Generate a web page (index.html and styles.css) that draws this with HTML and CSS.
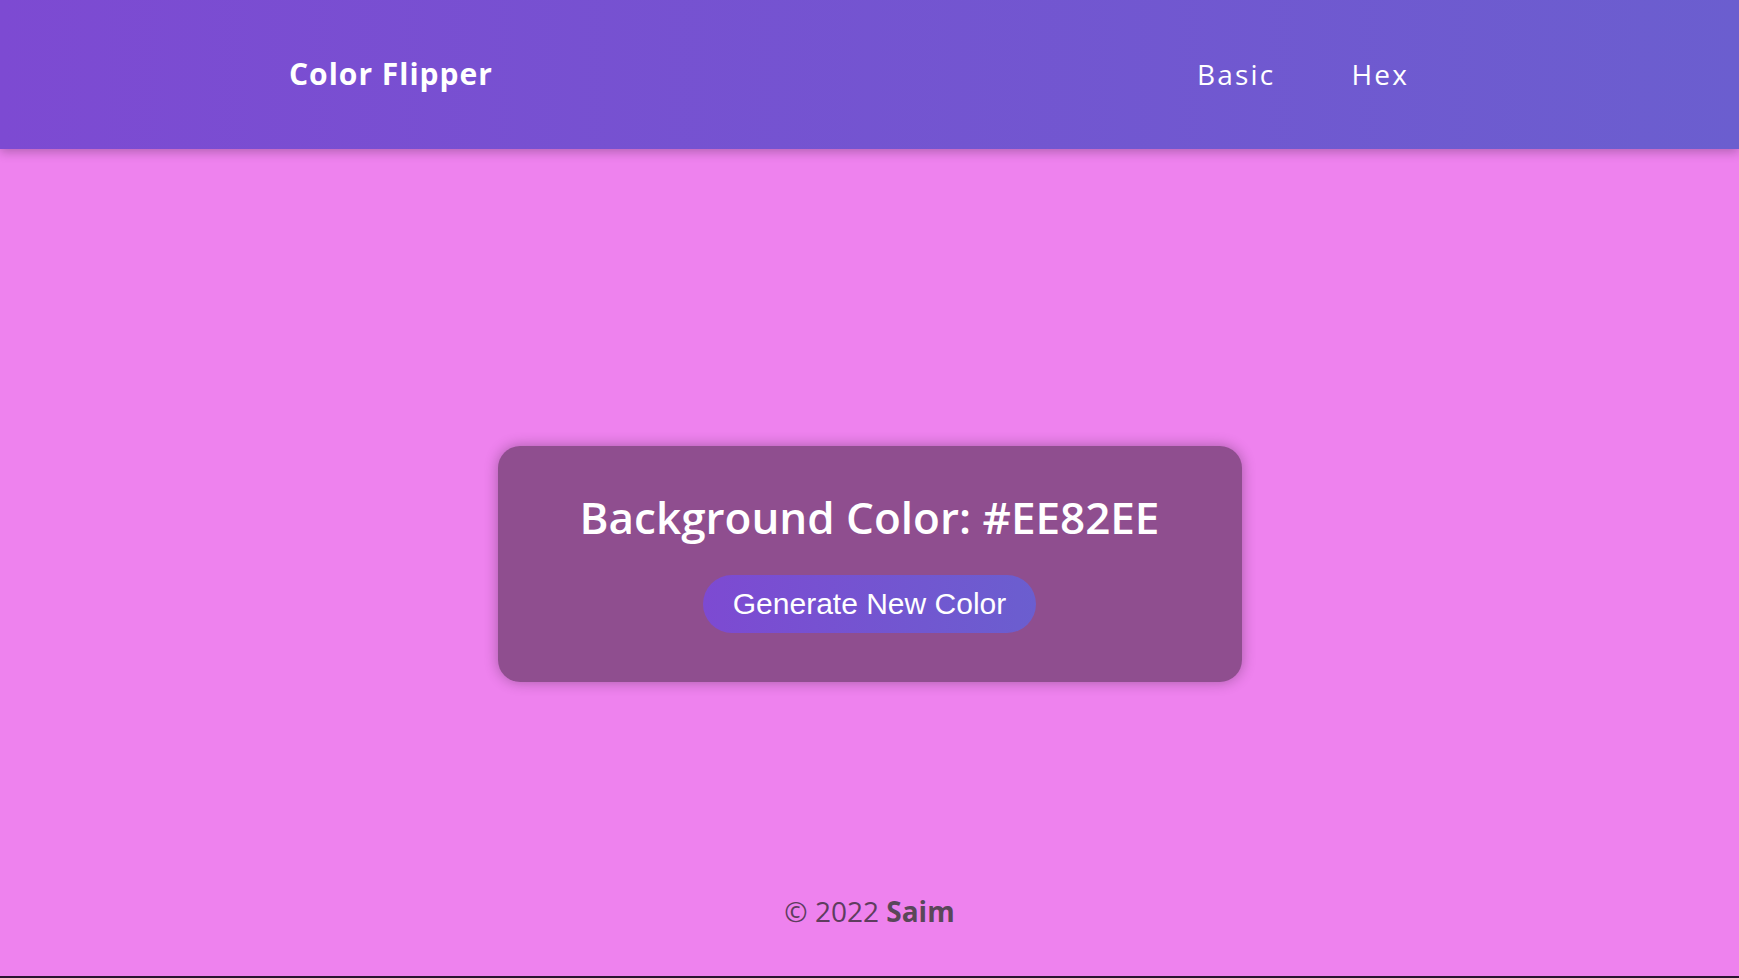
FILE: index.html
```html
<!DOCTYPE html>
<html lang="en">
<head>
<meta charset="UTF-8">
<meta name="viewport" content="width=device-width, initial-scale=1.0">
<title>Color Flipper</title>
<link rel="stylesheet" href="styles.css">
</head>
<body>

<header class="navbar">
  <div class="navInner">
    <a class="brand" href="#">Color Flipper</a>
    <nav class="navLinks">
      <a href="#">Basic</a>
      <a href="#">Hex</a>
    </nav>
  </div>
</header>

<main class="main">
  <div class="colorCard">
    <h2 class="colorLabel">Background Color: <span id="colorValue">#EE82EE</span></h2>
    <button id="flipBtn" class="flipBtn">Generate New Color</button>
  </div>
</main>

<footer class="footer">
  <p>&copy; 2022 <strong>Saim</strong></p>
</footer>

<script>
  var hexChars = "0123456789ABCDEF";

  function randomHex() {
    var hex = "#";
    for (var i = 0; i < 6; i++) {
      hex += hexChars[Math.floor(Math.random() * 16)];
    }
    return hex;
  }

  document.getElementById("flipBtn").addEventListener("click", function() {
    var color = randomHex();
    document.body.style.backgroundColor = color;
    document.getElementById("colorValue").textContent = color;
  });
</script>

</body>
</html>
```

FILE: styles.css
```css
* {
  box-sizing: border-box;
}
html, body {
  margin: 0;
  padding: 0;
}
body {
  font-family: "Open Sans", "Noto Sans", sans-serif;
  background-color: #ee82ee;
  min-height: 100vh;
  display: flex;
  flex-direction: column;
  border-bottom: 2px solid #2b1530;
}
a {
  text-decoration: none;
  color: inherit;
}
.navbar {
  height: 149px;
  background: linear-gradient(to right, #7d4ad2, #6b5ecf);
  box-shadow: 0 3px 10px rgba(0, 0, 0, 0.25);
  color: #fff;
  position: relative;
  z-index: 1;
}
.navInner {
  height: 100%;
  padding: 0 330px 2px 289px;
  display: flex;
  align-items: center;
  justify-content: space-between;
}
.brand {
  font-size: 30px;
  font-weight: 700;
  letter-spacing: 1px;
}
.navLinks {
  display: flex;
  gap: 76px;
}
.navLinks a {
  font-size: 28px;
  letter-spacing: 2.2px;
}
.main {
  flex: 1;
  display: flex;
  align-items: center;
  justify-content: center;
  padding-top: 98px;
}
.colorCard {
  width: 744px;
  height: 236px;
  background-color: rgba(0, 0, 0, 0.4);
  border-radius: 22px;
  box-shadow: 0 0 14px rgba(0, 0, 0, 0.3);
  display: flex;
  flex-direction: column;
  align-items: center;
  padding-top: 45px;
}
.colorLabel {
  margin: 0 0 32px;
  color: #fff;
  font-size: 44px;
  font-weight: 600;
  line-height: 52px;
}
.flipBtn {
  font-family: "Liberation Sans", Arial, sans-serif;
  font-size: 30px;
  color: #fff;
  border: none;
  border-radius: 30px;
  height: 58px;
  padding: 0 30px;
  background: linear-gradient(to right, #7d4ad2, #6b5ecf);
  cursor: pointer;
}
.flipBtn:hover {
  box-shadow: 0 0 10px #6b5ecf;
}
.footer {
  height: 96px;
  text-align: center;
  color: #5e3d5e;
  font-size: 28px;
}
.footer p {
  margin: 0;
  padding-top: 12px;
}
.footer strong {
  color: #594759;
}
```
